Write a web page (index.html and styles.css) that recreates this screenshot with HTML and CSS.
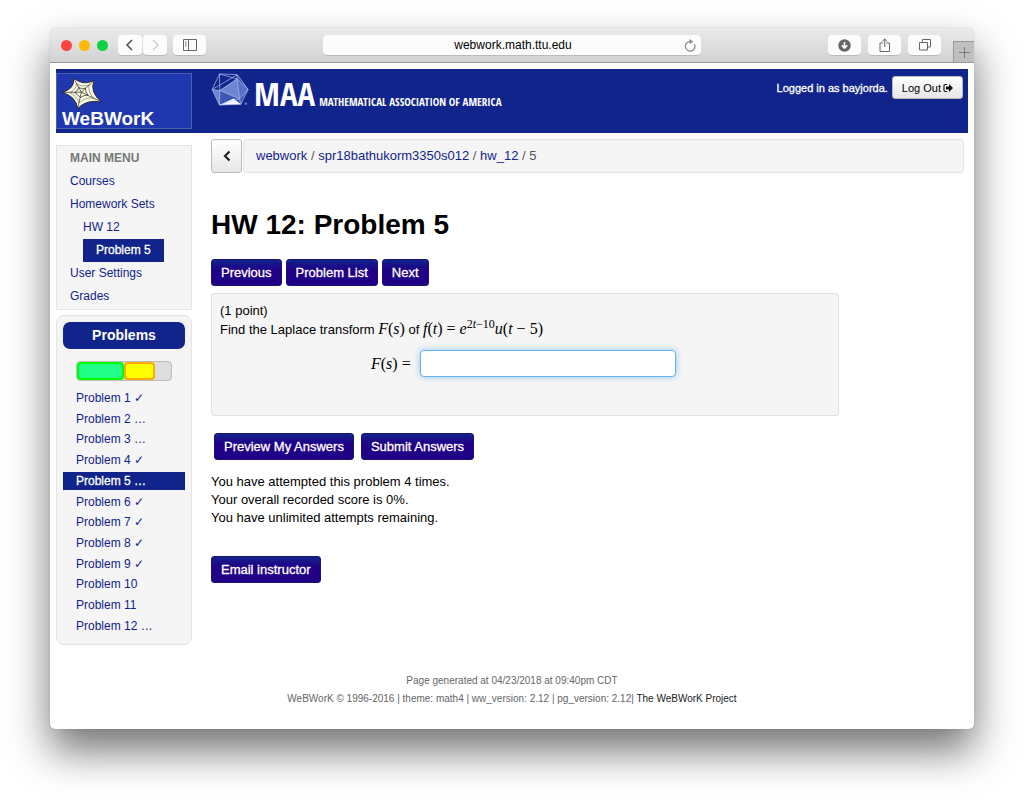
FILE: index.html
```html
<!DOCTYPE html>
<html lang="en">
<head>
    <meta charset="UTF-8">
    <meta name="viewport" content="width=device-width, initial-scale=1.0">
    <title>WeBWorK : HW 12 : Problem 5</title>
    <link rel="stylesheet" href="styles.css">
</head>
<body>
    <div class="window">
        <div class="toolbar">
            <div class="toolbar-left">
                <span class="dot red"></span>
                <span class="dot yellow"></span>
                <span class="dot green"></span>
                <button class="tool back" aria-label="Back"><svg width="12" height="14" viewBox="0 0 12 14"><path d="M8 2L3 7l5 5" fill="none" stroke="#555" stroke-width="1.6"/></svg></button>
                <button class="tool forward" aria-label="Forward"><svg width="12" height="14" viewBox="0 0 12 14"><path d="M4 2l5 5-5 5" fill="none" stroke="#ccc" stroke-width="1.4"/></svg></button>
                <button class="tool wide" aria-label="Sidebar"><svg width="14" height="12" viewBox="0 0 14 12"><path d="M.5 .5h13v11H.5zM5.500 .5v11M2 3h1.500M2 5h1.500M2 7h1.500" fill="none" stroke="#666"/></svg></button>
            </div>
            <div class="address">
                <input class="url" type="text" value="webwork.math.ttu.edu" aria-label="Address">
                <button class="reload" aria-label="Reload"><svg width="12" height="13" viewBox="0 0 12 13"><path d="M10.500 5.200A4.800 4.800 0 1 1 6 2.500" fill="none" stroke="#888" stroke-width="1.200"/><path d="M5.500 0L9.500 2.700 5.500 5z" fill="#888"/></svg></button>
            </div>
            <div class="toolbar-right">
                <button class="tool wide" aria-label="Downloads"><svg width="13" height="13" viewBox="0 0 13 13"><circle cx="6.500" cy="6.500" r="6.200" fill="#666"/><path d="M6.500 3v6M3.800 6.400l2.700 2.700 2.700-2.700" fill="none" stroke="#fff" stroke-width="1.6"/></svg></button>
                <button class="tool wide" aria-label="Share"><svg width="12" height="14" viewBox="0 0 12 14"><path d="M4 5H1v8.500h9.500V5h-3M5.750 9V1M3.300 3.400L5.750 1l2.450 2.400" fill="none" stroke="#666"/></svg></button>
                <button class="tool wide" aria-label="Tabs"><svg width="12" height="12" viewBox="0 0 12 12"><path d="M.5 3.500h8v7.500h-8zM3.500 3.500v-3h8v7.500h-3" fill="none" stroke="#666"/></svg></button>
                <button class="new-tab" aria-label="New tab"><svg width="11" height="11" viewBox="0 0 11 11"><path d="M5.500 0v11M0 5.500h11" stroke="#777"/></svg></button>
            </div>
        </div>

        <div class="page">
            <header class="masthead">
                <a href="#" class="webwork-logo">
                    <svg width="40" height="31" viewBox="0 0 120 92">
                        <path d="M35 0Q64 24 96 7Q82 42 119 72Q75 62 47 91Q42 54 0 43Q39 32 35 0z" fill="#f9f7dc" stroke="#222" stroke-width="2.500"/>
                        <path d="M58 42L35 0M58 42L96 7M58 42L119 72M58 42L47 91M58 42L0 43" stroke="#222" stroke-width="2"/>
                        <path d="M44 17Q63 28 81 20Q77 41 95 60Q71 56 51 74Q43 52 22 43Q42 36 44 17z" fill="none" stroke="#555" stroke-width="1.500"/>
                        <path d="M50 28Q61 34 70 30Q70 42 78 51Q67 50 55 58Q47 49 38 43Q48 38 50 28z" fill="none" stroke="#222" stroke-width="2"/>
                    </svg>
                    <span class="webwork-name">WeBWorK</span>
                </a>
                <a href="#" class="maa-logo">
                    <svg width="38" height="33" viewBox="462 22 114 100">
                        <path d="M487 25L541 27L574 72L552 117L487 119L465 72z" fill="#3d57b5"/>
                        <path d="M487 25L541 27L540 40L488 75L465 72z" fill="#11248b"/>
                        <path d="M540 40L488 75L548 100z" fill="#6d86d2"/>
                        <path d="M540 40L574 72L548 100z" fill="#5871c6"/>
                        <path d="M465 72L488 75L487 119z" fill="#6d86d2"/>
                        <path d="M487 119L530 99L552 117z" fill="#fff"/>
                        <path d="M487 25L541 27L574 72L552 117L487 119L465 72zM487 25L540 40L541 27M540 40L488 75L487 25M465 72L488 75L487 119L548 100L488 75M540 40L574 72L548 100zM548 100L552 117M465 72L540 28" fill="none" stroke="#b5c3ee" stroke-width="2"/>
                        <circle cx="567" cy="115" r="4" fill="#5578c4"/>
                    </svg>
                    <span class="maa">MAA</span>
                    <span class="maa-full">MATHEMATICAL ASSOCIATION OF AMERICA</span>
                </a>
                <div class="login">
                    <span>Logged in as bayjorda.</span>
                    <button class="btn-light logout">Log Out <svg width="10" height="10" viewBox="0 0 10 10"><path d="M4 1.500H2.200Q1 1.500 1 2.700v4.600q0 1.200 1.200 1.200H4" fill="none" stroke="#111" stroke-width="1.200"/><path d="M3 3.500h3V1l4 4-4 4V6.500H3z" fill="#111"/></svg></button>
                </div>
            </header>

            <div class="columns">
                <aside class="sidebar">
                    <nav class="main-menu">
                        <h2>MAIN MENU</h2>
                        <ul>
                            <li><a href="#">Courses</a></li>
                            <li><a href="#">Homework Sets</a></li>
                            <li class="nested"><a href="#">HW 12</a></li>
                            <li class="nested"><a href="#" class="current">Problem 5</a></li>
                            <li><a href="#">User Settings</a></li>
                            <li><a href="#">Grades</a></li>
                        </ul>
                    </nav>
                    <nav class="problems">
                        <h2>Problems</h2>
                        <div class="progress">
                            <div class="bar correct"></div>
                            <div class="bar attempted"></div>
                        </div>
                        <ul>
                            <li><a href="#">Problem 1 ✓</a></li>
                            <li><a href="#">Problem 2 …</a></li>
                            <li><a href="#">Problem 3 …</a></li>
                            <li><a href="#">Problem 4 ✓</a></li>
                            <li><a href="#" class="current">Problem 5 …</a></li>
                            <li><a href="#">Problem 6 ✓</a></li>
                            <li><a href="#">Problem 7 ✓</a></li>
                            <li><a href="#">Problem 8 ✓</a></li>
                            <li><a href="#">Problem 9 ✓</a></li>
                            <li><a href="#">Problem 10</a></li>
                            <li><a href="#">Problem 11</a></li>
                            <li><a href="#">Problem 12 …</a></li>
                        </ul>
                    </nav>
                </aside>

                <main class="content">
                    <div class="crumbs">
                        <button class="btn-light up" aria-label="Up"><svg width="8" height="12" viewBox="0 0 8 12"><path d="M6.500 1.500L2 6l4.500 4.500" fill="none" stroke="#222" stroke-width="2.200"/></svg></button>
                        <div class="breadcrumb">
                            <a href="#">webwork</a> <i>/</i>
                            <a href="#">spr18bathukorm3350s012</a> <i>/</i>
                            <a href="#">hw_12</a> <i>/</i>
                            <span>5</span>
                        </div>
                    </div>
                    <h1>HW 12: Problem 5</h1>
                    <div class="buttons">
                        <button class="btn">Previous</button>
                        <button class="btn">Problem List</button>
                        <button class="btn">Next</button>
                    </div>
                    <form>
                        <div class="problem">
                            <p>(1 point)</p>
                            <p>Find the Laplace transform <span class="math"><i>F</i>(<i>s</i>)</span> of <span class="math"><i>f</i>(<i>t</i>) = <i>e</i><sup>2<i>t</i>−10</sup><i>u</i>(<i>t</i> − 5)</span></p>
                            <div class="answer">
                                <label for="answer" class="math"><i>F</i>(<i>s</i>) =</label>
                                <input id="answer" type="text">
                            </div>
                        </div>
                        <div class="buttons submit">
                            <button type="button" class="btn">Preview My Answers</button>
                            <button type="button" class="btn">Submit Answers</button>
                        </div>
                    </form>
                    <div class="score">
                        <p>You have attempted this problem 4 times.</p>
                        <p>Your overall recorded score is 0%.</p>
                        <p>You have unlimited attempts remaining.</p>
                    </div>
                    <button class="btn">Email instructor</button>
                </main>
            </div>

            <footer class="footer">
                <p>Page generated at 04/23/2018 at 09:40pm CDT</p>
                <p>WeBWorK © 1996-2016 | theme: math4 | ww_version: 2.12 | pg_version: 2.12| <a href="#">The WeBWorK Project</a></p>
            </footer>
        </div>
    </div>
</body>
</html>
```
FILE: styles.css
```css
* {
    box-sizing: border-box;
}
body {
    margin: 0;
    padding: 28px 50px 71px;
    background: #fff;
    color: #000;
    font-family: "Liberation Sans", Arial, sans-serif;
    font-size: 13px;
    line-height: 18px;
}
h1, h2, p, ul {
    margin: 0;
    padding: 0;
}
ul {
    list-style: none;
}
a {
    color: #11248b;
    text-decoration: none;
}
button, input {
    font-family: inherit;
    margin: 0;
}
svg {
    display: block;
    flex: none;
}

/* browser window */
.window {
    border-radius: 5px;
    background: #fff;
    box-shadow: 0 0 1px rgba(0, 0, 0, 0.4), 0 22px 42px rgba(0, 0, 0, 0.55);
}
.toolbar {
    display: grid;
    grid-template-columns: 1fr 41% 1fr;
    height: 35px;
    border-radius: 5px 5px 0 0;
    border-bottom: 1px solid #999;
    background: linear-gradient(#ebebeb, #d2d2d2);
}
.toolbar-left, .toolbar-right {
    display: flex;
    align-items: center;
}
.toolbar-left {
    padding-left: 11px;
}
.dot {
    width: 11px;
    height: 11px;
    margin-right: 7px;
    border-radius: 50%;
}
.red {
    background: #fc4641;
}
.yellow {
    background: #fdb900;
}
.green {
    background: #0ed240;
}
.tool {
    display: flex;
    align-items: center;
    justify-content: center;
    width: 24px;
    height: 20px;
    padding: 0;
    border: none;
    border-radius: 4px;
    background: #fcfcfc;
    box-shadow: 0 1px 0 #bbb;
}
.tool.back {
    margin-left: 3px;
    margin-right: 1px;
}
.tool.forward {
    margin-right: 6px;
}
.tool.wide {
    width: 33px;
}
.address {
    display: flex;
    align-items: center;
    align-self: center;
    height: 20px;
    border-radius: 4px;
    background: #fcfcfc;
    box-shadow: 0 1px 0 #bbb;
}
.url {
    flex: 1;
    min-width: 0;
    padding: 0 0 0 24px;
    border: none;
    background: none;
    font-size: 12px;
    text-align: center;
}
.reload {
    padding: 0 5px;
    border: none;
    background: none;
}
.toolbar-right {
    justify-content: flex-end;
    gap: 7px;
}
.new-tab {
    display: flex;
    align-items: center;
    justify-content: center;
    align-self: flex-end;
    width: 21px;
    height: 21px;
    margin-left: 5px;
    padding: 0;
    border: 1px solid #999;
    border-width: 1px 0 0 1px;
    background: #bfbfbf;
}
.page {
    padding: 6px 6px 21px;
}

/* masthead */
.masthead {
    display: flex;
    align-items: flex-start;
    height: 64px;
    padding: 4px 5px 4px 0;
    background: #11248b;
    color: #fff;
}
.webwork-logo {
    display: flex;
    flex-direction: column;
    flex: none;
    width: 136px;
    height: 56px;
    margin-right: 19px;
    padding: 4px 5px;
    border: 1px solid #4a62b0;
    background: #1f38b0;
    color: #fff;
}
.webwork-name {
    font-size: 19px;
    font-weight: bold;
    line-height: 20px;
}
.maa-logo {
    display: flex;
    align-items: baseline;
    flex: 1;
    color: #fff;
    white-space: nowrap;
}
.maa {
    margin: 0 4px 0 5px;
    font-family: "Liberation Sans Narrow", "Open Sans Condensed", "DejaVu Sans Condensed", sans-serif;
    font-size: 33px;
    font-weight: bold;
    line-height: 36px;
}
.maa-full {
    font-family: "Liberation Sans Narrow", "Open Sans Condensed", "DejaVu Sans Condensed", sans-serif;
    font-size: 11px;
    font-weight: bold;
}
.login {
    display: flex;
    align-items: center;
    gap: 4px;
    padding-top: 3px;
    font-size: 11px;
    white-space: nowrap;
    -webkit-text-stroke: 0.3px #fff;
}
.btn-light {
    display: flex;
    align-items: center;
    justify-content: center;
    gap: 2px;
    border: 1px solid #bbb;
    border-radius: 3px;
    background: linear-gradient(#fff, #e6e6e6);
    -webkit-text-stroke: 0;
}
.logout {
    height: 23px;
    padding: 0 9px;
    font-size: 11px;
}

/* sidebar */
.columns {
    display: grid;
    grid-template-columns: 136px 1fr;
    gap: 19px;
    padding: 6px 4px 0 0;
}
.sidebar {
    padding-top: 6px;
    font-size: 12px;
}
.main-menu {
    padding: 1px 13px;
    border: 1px solid #e5e5e5;
    background: #f5f5f5;
    line-height: 23px;
}
.main-menu h2 {
    color: #777;
    font-size: 12px;
}
.nested {
    padding-left: 13px;
}
.current {
    background: #11248b;
    color: #fff;
    -webkit-text-stroke: 0.3px #fff;
}
.main-menu .current {
    display: inline-block;
    padding: 0 13px;
}
.problems {
    margin-top: 5px;
    padding: 6px 6px 9px;
    border: 1px solid #e5e5e5;
    border-radius: 8px;
    background: #f5f5f5;
}
.problems h2 {
    border-radius: 7px;
    background: #11248b;
    color: #fff;
    font-size: 14px;
    line-height: 27px;
    text-align: center;
}
.progress {
    display: flex;
    height: 20px;
    margin: 12px 13px 8px;
    border: 1px solid #bbb;
    border-radius: 4px;
    background: #ddd;
}
.bar {
    border-radius: 4px;
}
.correct {
    width: 50%;
    border: 2px solid #0f0;
    background: #2f8;
}
.attempted {
    width: 33%;
    border: 2px solid #fa0;
    background: #ff0;
}
.problems ul {
    display: flex;
    flex-direction: column;
    justify-content: space-between;
    min-height: 246px;
}
.problems li a {
    display: block;
    padding-left: 13px;
}

/* content */
.crumbs {
    display: flex;
    gap: 1px;
}
.up {
    width: 31px;
    height: 34px;
    padding: 0;
}
.breadcrumb {
    flex: 1;
    padding: 7px 12px;
    border: 1px solid #e5e5e5;
    border-radius: 4px;
    background: #f5f5f5;
    color: #555;
}
.breadcrumb i {
    font-style: normal;
}
h1 {
    margin: 33px 0 15px;
    font-size: 28px;
    line-height: 38px;
}
.buttons {
    display: flex;
    gap: 4px;
}
.btn {
    height: 27px;
    padding: 0 9px;
    border: 1px solid #1c1272;
    border-radius: 3px;
    background: linear-gradient(#11248b, #200087 40%);
    color: #fff;
    font-size: 13px;
    -webkit-text-stroke: 0.3px #fff;
}
.problem {
    width: 83.4%;
    min-height: 123px;
    margin-top: 7px;
    padding: 8px;
    border: 1px solid #e0e0e0;
    border-radius: 3px;
    background: #f5f5f5;
}
.math {
    font-family: "Liberation Serif", "Times New Roman", serif;
    font-size: 16px;
}
.math sup {
    font-size: 12px;
    line-height: 0;
}
.answer {
    display: flex;
    align-items: center;
    gap: 9px;
    margin: 11px 0 0 151px;
}
.answer input {
    width: 256px;
    height: 27px;
    border: 1px solid #66b4ee;
    border-radius: 4px;
    outline: none;
    background: #fff;
    box-shadow: 0 0 6px rgba(82, 168, 236, 0.6);
}
.submit {
    gap: 7px;
    margin: 17px 0 13px 3px;
}
.score {
    margin-bottom: 29px;
}

/* footer */
.footer {
    margin-top: 27px;
    color: #666;
    font-size: 10px;
    text-align: center;
}
.footer a {
    color: #222;
}
```
